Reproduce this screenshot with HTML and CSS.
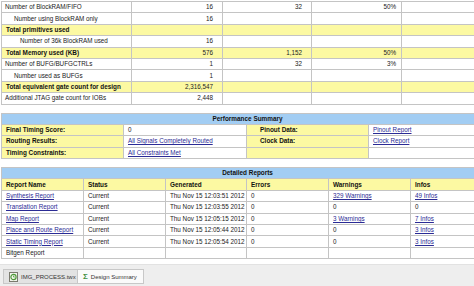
FILE: index.html
```html
<!DOCTYPE html>
<html lang="en">
<head>
    <meta charset="UTF-8">
    <title>Design Summary</title>
    <link rel="stylesheet" href="styles.css">
</head>
<body>
    <div class="page">
        <!-- Device utilization (continued) -->
        <table class="summary util">
            <colgroup>
                <col style="width:130px"><col style="width:91px"><col style="width:89px"><col style="width:90px"><col style="width:92px">
            </colgroup>
            <tr><td>Number of BlockRAM/FIFO</td><td class="num">16</td><td class="num">32</td><td class="pct">50%</td><td></td></tr>
            <tr><td class="ind1">Number using BlockRAM only</td><td class="num">16</td><td></td><td></td><td></td></tr>
            <tr class="total"><td>Total primitives used</td><td></td><td></td><td></td><td></td></tr>
            <tr><td class="ind2">Number of 36k BlockRAM used</td><td class="num">16</td><td></td><td></td><td></td></tr>
            <tr class="total"><td>Total Memory used (KB)</td><td class="num">576</td><td class="num">1,152</td><td class="pct">50%</td><td></td></tr>
            <tr><td>Number of BUFG/BUFGCTRLs</td><td class="num">1</td><td class="num">32</td><td class="pct">3%</td><td></td></tr>
            <tr><td class="ind1">Number used as BUFGs</td><td class="num">1</td><td></td><td></td><td></td></tr>
            <tr class="total"><td>Total equivalent gate count for design</td><td class="num">2,316,547</td><td></td><td></td><td></td></tr>
            <tr><td>Additional JTAG gate count for IOBs</td><td class="num">2,448</td><td></td><td></td><td></td></tr>
        </table>

        <!-- Performance summary -->
        <table class="summary perf">
            <colgroup>
                <col style="width:122px"><col style="width:123px"><col style="width:122px"><col style="width:125px">
            </colgroup>
            <tr class="head"><td colspan="4">Performance Summary</td></tr>
            <tr><td class="label">Final Timing Score:</td><td>0</td><td class="label sub">Pinout Data:</td><td><a href="#">Pinout Report</a></td></tr>
            <tr><td class="label">Routing Results:</td><td><a href="#">All Signals Completely Routed</a></td><td class="label sub">Clock Data:</td><td><a href="#">Clock Report</a></td></tr>
            <tr><td class="label">Timing Constraints:</td><td><a href="#">All Constraints Met</a></td><td class="label sub"></td><td></td></tr>
        </table>

        <!-- Detailed reports -->
        <table class="summary detail">
            <colgroup>
                <col style="width:82px"><col style="width:82px"><col style="width:81px"><col style="width:82px"><col style="width:82px"><col style="width:83px">
            </colgroup>
            <tr class="head"><td colspan="6">Detailed Reports</td></tr>
            <tr class="cols"><td>Report Name</td><td>Status</td><td>Generated</td><td>Errors</td><td>Warnings</td><td>Infos</td></tr>
            <tr><td><a href="#">Synthesis Report</a></td><td>Current</td><td>Thu Nov 15 12:03:51 2012</td><td>0</td><td><a href="#">329 Warnings</a></td><td><a href="#">49 Infos</a></td></tr>
            <tr><td><a href="#">Translation Report</a></td><td>Current</td><td>Thu Nov 15 12:03:55 2012</td><td>0</td><td>0</td><td>0</td></tr>
            <tr><td><a href="#">Map Report</a></td><td>Current</td><td>Thu Nov 15 12:05:15 2012</td><td>0</td><td><a href="#">3 Warnings</a></td><td><a href="#">7 Infos</a></td></tr>
            <tr><td><a href="#">Place and Route Report</a></td><td>Current</td><td>Thu Nov 15 12:05:44 2012</td><td>0</td><td>0</td><td><a href="#">3 Infos</a></td></tr>
            <tr><td><a href="#">Static Timing Report</a></td><td>Current</td><td>Thu Nov 15 12:05:54 2012</td><td>0</td><td>0</td><td><a href="#">3 Infos</a></td></tr>
            <tr><td>Bitgen Report</td><td></td><td></td><td></td><td></td><td></td></tr>
        </table>
    </div>

    <!-- Editor tabs -->
    <div class="tabbar">
        <div class="tab">
            <svg class="icon" width="9" height="10" viewBox="0 0 9 10">
                <rect x="0.5" y="0.5" width="8" height="9" fill="#f4f4ee" stroke="#7a7a6e"/>
                <circle cx="4.5" cy="5" r="2.6" fill="none" stroke="#4e9a3a" stroke-width="1.2"/>
                <path d="M4.5 3.6 V5 H5.8" fill="none" stroke="#4e9a3a" stroke-width="0.8"/>
            </svg>
            <span>IMG_PROCESS.twx</span>
        </div>
        <div class="tab active">
            <span class="sigma">&Sigma;</span>
            <span>Design Summary</span>
        </div>
    </div>
</body>
</html>
```

FILE: styles.css
```css
html, body {
    margin: 0;
    height: 100%;
}

body {
    display: flex;
    flex-direction: column;
    overflow: hidden;
    background: #fff;
    font-family: 'Liberation Sans', Arial, sans-serif;
    font-size: 6.3px;
    color: #222;
}

.page {
    flex: 1;
    padding: 1px 0 0 1px;
}

/* Summary tables */
.summary {
    width: 492px;
    border-collapse: collapse;
    table-layout: fixed;
}

.summary td {
    height: 11.4px;
    padding: 0 4px;
    border: 1px solid #c4c4c4;
    white-space: nowrap;
    overflow: hidden;
    line-height: 8px;
    box-sizing: border-box;
}

.summary a {
    color: #2b2b95;
    text-decoration: underline;
}

.util td:first-child {
    padding-left: 3px;
}

.util td.num {
    text-align: right;
    padding-right: 9px;
}

.util td.pct {
    text-align: right;
    padding-right: 5px;
}

.util td.ind1 {
    padding-left: 12px;
}

.util td.ind2 {
    padding-left: 18px;
}

.total td {
    background: #fcf9a2;
}

.total td:first-child {
    padding-left: 4px;
    font-weight: bold;
    font-size: 6.4px;
    color: #111;
}

.head td {
    background: #a2cdf3;
    text-align: center;
    font-weight: bold;
    font-size: 6.4px;
    color: #111;
}

.perf {
    margin-top: 8px;
}

.perf td.label {
    background: #fcf9a2;
    font-weight: bold;
    font-size: 6.4px;
    color: #111;
}

.perf td.sub {
    padding-left: 13px;
}

.detail {
    margin-top: 8px;
}

.detail .cols td {
    background: #fcf9a2;
    font-weight: bold;
    font-size: 6.4px;
    color: #111;
}

/* Tab strip */
.tabbar {
    height: 22px;
    background: #eeeeee;
    border-top: 1px solid #e2e2e2;
    display: flex;
    align-items: flex-end;
    padding: 0 0 2px 3px;
    box-sizing: border-box;
}

.tab {
    height: 15px;
    display: flex;
    align-items: center;
    gap: 3px;
    padding: 0 5px;
    font-size: 6px;
    color: #333;
    white-space: nowrap;
    overflow: hidden;
    background: #e3e3e3;
    border: 1px solid #c8c8c8;
    box-sizing: border-box;
}

.tab:first-child {
    width: 75px;
}

.tab.active {
    width: 66px;
    background: #fafafa;
    border-left: none;
    padding-left: 5px;
}

.icon {
    flex: none;
}

.sigma {
    color: #3f8f3f;
    font-weight: bold;
    font-size: 8px;
    line-height: 8px;
}
```
